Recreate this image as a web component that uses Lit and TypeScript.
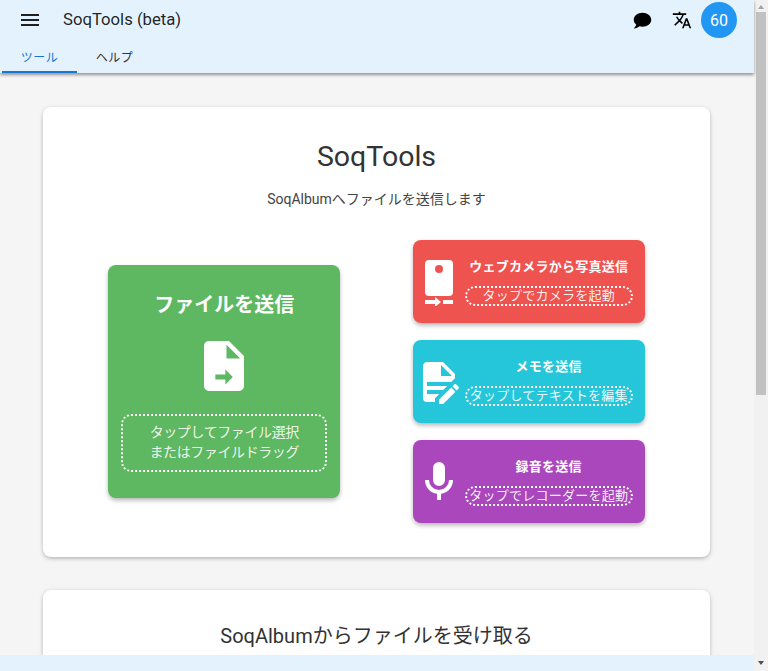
import { LitElement, html, css, svg } from "lit";
import { customElement } from "lit/decorators.js";

const icon = (d: unknown, cls = "") => html`<svg class="icon ${cls}" viewBox="0 0 24 24" aria-hidden="true">${d}</svg>`;

const P = {
  menu: svg`<path d="M3,6H21V8H3V6M3,11H21V13H3V11M3,16H21V18H3V16Z"/>`,
  chat: svg`<path d="M12,3C17.5,3 22,6.58 22,11C22,15.42 17.5,19 12,19C10.76,19 9.57,18.82 8.47,18.5C5.55,21 2,21 2,21C4.33,18.67 4.7,17.1 4.75,16.5C3.05,15.07 2,13.13 2,11C2,6.58 6.5,3 12,3Z"/>`,
  translate: svg`<path d="M12.87,15.07L10.33,12.56L10.36,12.53C12.1,10.59 13.34,8.36 14.07,6H17V4H10V2H8V4H1V6H12.17C11.5,7.92 10.44,9.75 9,11.35C8.07,10.32 7.3,9.19 6.69,8H4.69C5.42,9.63 6.42,11.17 7.67,12.56L2.58,17.58L4,19L9,14L12.11,17.11L12.87,15.07M18.5,10H16.5L12,22H14L15.12,19H19.87L21,22H23L18.5,10M15.88,17L17.5,12.67L19.12,17H15.88Z"/>`,
  file: svg`<path d="M14,2H6C4.89,2 4,2.89 4,4V20A2,2 0 0,0 6,22H18A2,2 0 0,0 20,20V8L14,2M12.54,19.37V17.37H8.54V15.38H12.54V13.38L15.54,16.38L12.54,19.37M13,9V3.5L18.5,9H13Z"/>`,
  camera: svg`<path d="M7,1H17A2,2 0 0,1 19,3V17A2,2 0 0,1 17,19H7A2,2 0 0,1 5,17V3A2,2 0 0,1 7,1M12,3.5A2,2 0 0,0 10,5.5A2,2 0 0,0 12,7.5A2,2 0 0,0 14,5.5A2,2 0 0,0 12,3.5M14,21H19V23H14V21M10,21H5V23H10V24.5L13,22L10,19.5V21Z"/>`,
  memo: svg`<path d="M6,2C4.89,2 4,2.9 4,4V20A2,2 0 0,0 6,22H10V20.09L12.09,18H6V16H14.09L16.09,14H6V12H18.09L20,10.09V8L14,2H6M13,3.5L18.5,9H13V3.5M20.15,13C20,13 19.86,13.05 19.75,13.16L18.73,14.18L20.82,16.26L21.84,15.25C22.05,15.03 22.05,14.67 21.84,14.46L20.54,13.16C20.43,13.05 20.29,13 20.15,13M18.14,14.77L12,20.92V23H14.08L20.23,16.85L18.14,14.77Z"/>`,
  mic: svg`<path d="M12,2A3,3 0 0,1 15,5V11A3,3 0 0,1 12,14A3,3 0 0,1 9,11V5A3,3 0 0,1 12,2M19,11C19,14.53 16.39,17.44 13,17.93V21H11V17.93C7.61,17.44 5,14.53 5,11H7A5,5 0 0,0 12,16A5,5 0 0,0 17,11H19Z"/>`,
};

const actions = [
  { cls: "red", icon: P.camera, title: "ウェブカメラから写真送信", hint: "タップでカメラを起動" },
  { cls: "cyan", icon: P.memo, title: "メモを送信", hint: "タップしてテキストを編集" },
  { cls: "purple", icon: P.mic, title: "録音を送信", hint: "タップでレコーダーを起動" },
];

@customElement("app-root")
export class AppRoot extends LitElement {
  static styles = css`
    :host {
      display: grid;
      grid-template-columns: 754px 14px;
      height: 671px;
      overflow: hidden;
      font-family: Roboto, "Noto Sans CJK JP", sans-serif;
      color: rgba(0, 0, 0, 0.87);
    }
    .icon { display: block; fill: currentColor; flex: none; }
    .page {
      display: flex;
      flex-direction: column;
      height: 671px;
      min-width: 0;
      background: #f5f5f5;
    }
    header {
      flex: none;
      position: relative;
      z-index: 2;
      height: 73px;
      background: #e3f2fd;
      box-shadow: 0 2px 3px rgba(0, 0, 0, 0.4);
    }
    .toolbar {
      display: flex;
      align-items: center;
      height: 40px;
      padding: 0 17px 0 18px;
    }
    .menu { width: 24px; height: 24px; }
    .app-title {
      margin-left: 21px;
      font-size: 16.7px;
      line-height: 24px;
      flex: 1;
    }
    .act {
      width: 24px;
      height: 24px;
      color: #000;
      display: flex;
      align-items: center;
      justify-content: center;
    }
    .act.chat { margin-right: 16px; }
    .act.trans { margin-right: 7px; }
    .act.trans svg { width: 20px; height: 20px; }
    .act.chat svg { width: 21px; height: 21px; }
    .avatar {
      width: 36px;
      height: 36px;
      border-radius: 50%;
      background: #2196f3;
      color: #fff;
      font-size: 16px;
      display: flex;
      align-items: center;
      justify-content: center;
    }
    .tabs {
      display: flex;
      padding-left: 2px;
      height: 33px;
    }
    .tab {
      width: 75px;
      display: flex;
      align-items: center;
      justify-content: center;
      font-size: 12px;
      letter-spacing: 0.5px;
      box-sizing: border-box;
      color: #333;
    }
    .tab.active {
      color: #1976d2;
      box-shadow: inset 0 -2px 0 #1976d2;
    }
    main {
      flex: 1;
      min-height: 0;
      overflow: hidden;
      padding: 34px 44px 0 43px;
    }
    .card {
      background: #fff;
      border-radius: 8px;
      box-shadow: 0 2px 4px -1px rgba(0,0,0,.2), 0 1px 5px 0 rgba(0,0,0,.14);
    }
    .top {
      height: 450px;
      box-sizing: border-box;
      padding-top: 30px;
      text-align: center;
    }
    h1 {
      margin: 0;
      font-size: 28.5px;
      font-weight: 400;
      line-height: 40px;
      color: #333;
    }
    .sub {
      margin: 10px 0 0;
      font-size: 14px;
      line-height: 24px;
      color: #444;
    }
    .grid {
      display: grid;
      grid-template-columns: 1fr 1fr;
      align-items: center;
      justify-items: center;
      padding: 29px 29px 0;
    }
    .tile {
      width: 232px;
      border-radius: 8px;
      color: #fff;
      box-sizing: border-box;
      box-shadow: 0 3px 5px -1px rgba(0,0,0,.2), 0 2px 5px 0 rgba(0,0,0,.14);
    }
    .big {
      height: 233px;
      background: #5eb761;
      display: flex;
      flex-direction: column;
      align-items: center;
      padding-top: 25px;
    }
    .big h2 {
      margin: 0;
      font-size: 20px;
      line-height: 30px;
      font-weight: 700;
    }
    .big .icon { width: 60px; height: 60px; margin-top: 16px; }
    .dash {
      margin-top: 18px;
      width: 206px;
      height: 58px;
      box-sizing: border-box;
      border: 2px dotted #fff;
      border-radius: 10px;
      font-size: 14px;
      line-height: 20px;
      letter-spacing: -0.4px;
      padding-top: 6px;
      color: rgba(255,255,255,.9);
    }
    .stack { display: flex; flex-direction: column; gap: 17px; }
    .small {
      height: 83px;
      display: flex;
      align-items: center;
      padding: 0 12px 0 2px;
    }
    .small .icon { width: 48px; height: 48px; }
    .red { background: #ef5350; }
    .cyan { background: #26c6da; }
    .purple { background: #ab47bc; }
    .small .text {
      flex: 1;
      min-width: 0;
      margin-left: 2px;
      display: flex;
      flex-direction: column;
      align-items: center;
      gap: 9px;
    }
    .small h3 {
      margin: 0;
      font-size: 13px;
      line-height: 20px;
      font-weight: 700;
      letter-spacing: 0.25px;
    }
    .pill {
      width: 100%;
      height: 20px;
      box-sizing: border-box;
      border: 2px dotted #fff;
      border-radius: 10px;
      font-size: 13px;
      line-height: 16px;
      letter-spacing: 0.25px;
      white-space: nowrap;
      color: rgba(255,255,255,.92);
    }
    .second {
      margin-top: 33px;
      height: 200px;
      padding-top: 32px;
      box-sizing: border-box;
      text-align: center;
    }
    .second h2 {
      margin: 0;
      font-size: 20px;
      line-height: 28px;
      font-weight: 400;
      color: #333;
    }
    .foot {
      flex: none;
      position: relative;
      z-index: 2;
      height: 16px;
      background: #e3f2fd;
    }
    .scrollbar {
      background: #f1f1f1;
      display: flex;
      flex-direction: column;
      align-items: center;
      height: 671px;
    }
    .thumb { width: 10px; height: 383px; background: #c1c1c1; }
    .gap { flex: 1; }
    .arrow { width: 0; height: 0; border-left: 3.5px solid transparent; border-right: 3.5px solid transparent; }
    .arrow.up { border-bottom: 4px solid #a3a3a3; margin: 5px 0 3px; }
    .arrow.down { border-top: 4px solid #505050; margin: 3px 0 6px; }
  `;

  render() {
    return html`
      <div class="page">
        <header>
          <div class="toolbar">
            ${icon(P.menu, "menu")}
            <div class="app-title">SoqTools (beta)</div>
            <div class="act chat">${icon(P.chat)}</div>
            <div class="act trans">${icon(P.translate)}</div>
            <div class="avatar">60</div>
          </div>
          <div class="tabs">
            <div class="tab active">ツール</div>
            <div class="tab">ヘルプ</div>
          </div>
        </header>
        <main>
          <section class="card top">
            <h1>SoqTools</h1>
            <p class="sub">SoqAlbumへファイルを送信します</p>
            <div class="grid">
              <div class="tile big">
                <h2>ファイルを送信</h2>
                ${icon(P.file)}
                <div class="dash">タップしてファイル選択<br />またはファイルドラッグ</div>
              </div>
              <div class="stack">
                ${actions.map(
                  (a) => html`
                    <div class="tile small ${a.cls}">
                      ${icon(a.icon)}
                      <div class="text">
                        <h3>${a.title}</h3>
                        <div class="pill">${a.hint}</div>
                      </div>
                    </div>
                  `
                )}
              </div>
            </div>
          </section>
          <section class="card second"><h2>SoqAlbumからファイルを受け取る</h2></section>
        </main>
        <div class="foot"></div>
      </div>
      <div class="scrollbar">
        <div class="arrow up"></div>
        <div class="thumb"></div>
        <div class="gap"></div>
        <div class="arrow down"></div>
      </div>
    `;
  }
}
